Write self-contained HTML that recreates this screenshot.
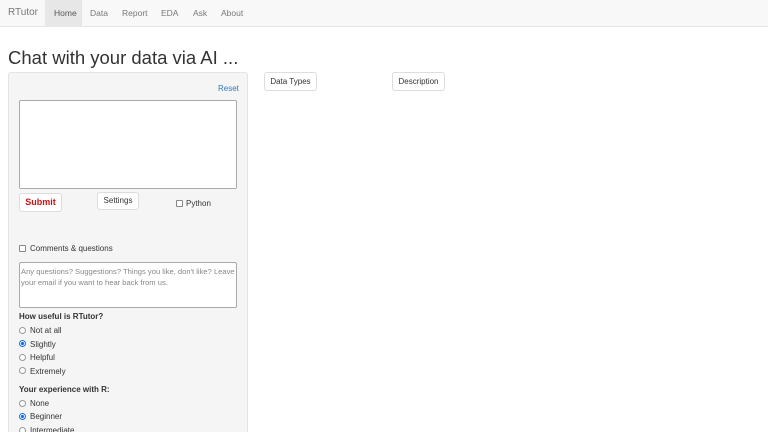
<!DOCTYPE html>
<html style="overflow:hidden;height:432px"><head><style>
*{box-sizing:border-box}
body{margin:0;width:768px;height:432px;overflow:hidden;background:#fff;font-family:"Liberation Sans",Arial,sans-serif;color:#333;position:relative}
.nav{position:absolute;left:0;top:0;width:768px;height:27px;background:#f8f8f8;border-bottom:1px solid #e7e7e7}
.nav span{position:absolute;top:8px;font-size:8.5px;color:#777}
.a{position:absolute}
.btn{position:absolute;background:#fff;border:1px solid #ddd;border-radius:3px;font-size:8px;color:#333;text-align:center}
.lbl{position:absolute;font-size:8px;color:#333}
.rad{position:absolute;width:7px;height:7px;border:1px solid #999;border-radius:50%;background:#fff}
.rad.on{border-color:#1a73e8;background:radial-gradient(circle,#1a73e8 40%,#fff 55%)}
.cb{position:absolute;width:7px;height:7px;border:1px solid #888;border-radius:1px;background:#fff}
</style></head><body>
<div class="nav">
<span style="left:8px;top:7px;font-size:10px;color:#777">RTutor</span>
<div class="a" style="left:45px;top:0;width:37px;height:27px;background:#e7e7e7"></div>
<span style="left:54px;color:#555">Home</span>
<span style="left:90px">Data</span>
<span style="left:122px">Report</span>
<span style="left:161px">EDA</span>
<span style="left:193px">Ask</span>
<span style="left:221px">About</span>
</div>
<div class="a" style="left:8px;top:47px;font-size:18.5px;color:#333">Chat with your data via AI ...</div>
<div class="a" style="left:8px;top:72px;width:240px;height:380px;background:#f5f5f5;border:1px solid #e3e3e3;border-radius:3px"></div>
<div class="a" style="left:218px;top:84px;font-size:8px;color:#337ab7">Reset</div>
<div class="a" style="left:19px;top:100px;width:218px;height:89px;background:#fff;border:1px solid #aaa;border-radius:2px"></div>
<div class="btn" style="left:19px;top:193px;width:43px;height:19px;line-height:17px;color:#cc1111;font-weight:bold;font-size:9px">Submit</div>
<div class="btn" style="left:97px;top:192px;width:42px;height:18px;line-height:16px">Settings</div>
<div class="cb" style="left:176px;top:200px"></div>
<div class="lbl" style="left:186px;top:199px">Python</div>
<div class="cb" style="left:19px;top:245px"></div>
<div class="lbl" style="left:30px;top:244px">Comments &amp; questions</div>
<div class="a" style="left:19px;top:262px;width:218px;height:46px;background:#fff;border:1px solid #aaa;border-radius:2px;font-size:7.6px;color:#888;padding:3px 1px;line-height:11px">Any questions? Suggestions? Things you like, don't like? Leave your email if you want to hear back from us.</div>
<div class="lbl" style="left:19px;top:312px;font-weight:bold">How useful is RTutor?</div>
<div class="rad" style="left:19px;top:327px"></div><div class="lbl" style="left:30px;top:326px">Not at all</div>
<div class="rad on" style="left:19px;top:340px"></div><div class="lbl" style="left:30px;top:340px">Slightly</div>
<div class="rad" style="left:19px;top:354px"></div><div class="lbl" style="left:30px;top:353px">Helpful</div>
<div class="rad" style="left:19px;top:367px"></div><div class="lbl" style="left:30px;top:367px">Extremely</div>
<div class="lbl" style="left:19px;top:385px;font-weight:bold">Your experience with R:</div>
<div class="rad" style="left:19px;top:400px"></div><div class="lbl" style="left:30px;top:399px">None</div>
<div class="rad on" style="left:19px;top:413px"></div><div class="lbl" style="left:30px;top:412px">Beginner</div>
<div class="rad" style="left:19px;top:427px"></div><div class="lbl" style="left:30px;top:426px">Intermediate</div>
<div class="btn" style="left:264px;top:72px;width:53px;height:19px;line-height:17px">Data Types</div>
<div class="btn" style="left:392px;top:72px;width:53px;height:19px;line-height:17px">Description</div>
</body></html>
